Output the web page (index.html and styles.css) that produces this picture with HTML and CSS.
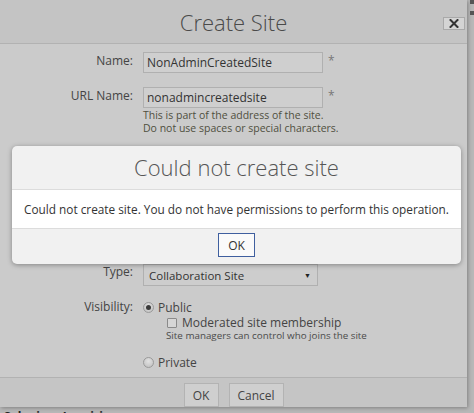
FILE: index.html
```html
<!DOCTYPE html>
<html>
<head>
<meta charset="utf-8">
<link rel="stylesheet" href="styles.css">
</head>
<body>
<div class="page">
  <div class="scroll-marks"><span></span><span></span></div>
  <div class="dialog">
    <div class="dlg-header">
      <div class="dlg-title">Create Site</div>
      <button class="close-btn" aria-label="Close">
        <svg width="10" height="9" viewBox="0 0 10 9"><path d="M1.5 1 L8.5 8 M8.5 1 L1.5 8" stroke="#333" stroke-width="2" stroke-linecap="square"/></svg>
      </button>
    </div>
    <div class="dlg-body">
      <div class="row row-name">
        <label class="lbl">Name:</label>
        <div class="field">
          <div class="input-wrap"><div class="input">NonAdminCreatedSite</div><span class="req">*</span></div>
        </div>
      </div>
      <div class="row row-url">
        <label class="lbl">URL Name:</label>
        <div class="field">
          <div class="input-wrap"><div class="input">nonadmincreatedsite</div><span class="req">*</span></div>
          <div class="help">This is part of the address of the site.<br>Do not use spaces or special characters.</div>
        </div>
      </div>
      <div class="row row-desc">
        <label class="lbl">Description:</label>
        <div class="field"><div class="textarea"></div></div>
      </div>
      <div class="row row-type">
        <label class="lbl">Type:</label>
        <div class="field">
          <div class="select"><span>Collaboration Site</span><span class="arrow">&#9660;</span></div>
        </div>
      </div>
      <div class="row row-vis">
        <label class="lbl">Visibility:</label>
        <div class="field">
          <div class="opt"><span class="radio checked"></span><span class="opt-text">Public</span></div>
          <div class="sub">
            <div class="chk-line"><span class="checkbox"></span><span class="chk-text">Moderated site membership</span></div>
            <div class="sub-help">Site managers can control who joins the site</div>
          </div>
          <div class="opt opt-private"><span class="radio"></span><span class="opt-text">Private</span></div>
        </div>
      </div>
    </div>
    <div class="dlg-footer">
      <button class="btn btn-ok">OK</button>
      <button class="btn btn-cancel">Cancel</button>
    </div>
  </div>
  <div class="bg-text">Selenium Inquiries</div>

  <div class="modal">
    <div class="modal-header">Could not create site</div>
    <div class="modal-body">Could not create site. You do not have permissions to perform this operation.</div>
    <div class="modal-footer"><button class="modal-ok">OK</button></div>
  </div>
</div>
</body>
</html>
```
FILE: styles.css
```css
* { box-sizing: border-box; }
html, body { margin: 0; padding: 0; }
body {
  background: #b8b8b8;
  font-family: "Open Sans", "Liberation Sans", sans-serif;
  color: #444;
}
.page {
  position: relative;
  width: 474px;
  height: 413px;
  overflow: hidden;
}
.scroll-marks {
  position: absolute;
  right: 0;
  top: 0;
  width: 4px;
}
.scroll-marks span {
  display: block;
  height: 4px;
  background: #555;
  margin-bottom: 7px;
}
.dialog {
  width: 467px;
  height: 407px;
  background: #cbcbcb;
  box-shadow: 1px 1px 4px rgba(0,0,0,0.3);
  display: flex;
  flex-direction: column;
}
.dlg-header {
  position: relative;
  height: 44px;
  background: #c4c4c4;
  border-bottom: 1px solid #b2b2b2;
  display: flex;
  align-items: center;
  justify-content: center;
}
.dlg-title {
  font-size: 22px;
  font-weight: 300;
  color: #4a4a4a;
  margin-top: 1px;
}
.close-btn {
  position: absolute;
  right: 2px;
  top: 17px;
  width: 22px;
  height: 13px;
  padding: 0;
  border: 1px solid #a9a9a9;
  background: #d4d4d4;
  display: flex;
  align-items: center;
  justify-content: center;
}
.dlg-body {
  flex: 1;
  padding-top: 8px;
}
.row {
  display: grid;
  grid-template-columns: 133px 1fr;
  column-gap: 10px;
}
.lbl {
  text-align: right;
  font-size: 12px;
  color: #444;
  line-height: 16px;
}
.row-name .lbl, .row-url .lbl { padding-top: 1px; }
.row-url { margin-top: 14px; }
.input-wrap {
  display: flex;
  align-items: flex-start;
}
.input {
  width: 180px;
  height: 21px;
  border: 1px solid #b0b0b0;
  background: #cfcfcf;
  font-size: 12px;
  line-height: 19px;
  padding-left: 3px;
  color: #333;
}
.req {
  margin-left: 5px;
  font-size: 12px;
  color: #777;
  line-height: 18px;
}
.help {
  font-size: 10.5px;
  line-height: 12.5px;
  color: #4f4f40;
  padding-top: 1px;
}
.row-desc { margin-top: 12px; visibility: hidden; }
.textarea { width: 180px; height: 104px; }
.row-type { margin-top: 14px; }
.row-type .lbl { padding-top: 0; }
.select {
  width: 175px;
  height: 22px;
  border: 1px solid #b0b0b0;
  background: #cdcdcd;
  display: flex;
  align-items: center;
  justify-content: space-between;
  padding: 0 6px 0 5px;
  font-size: 11.5px;
  color: #333;
}
.arrow { font-size: 7px; color: #222; }
.row-vis { margin-top: 13px; }
.row-vis .lbl { padding-top: 0; }
.opt {
  display: flex;
  align-items: center;
  height: 16px;
}
.radio {
  width: 11px;
  height: 11px;
  border-radius: 50%;
  border: 1px solid #9a9a9a;
  background: radial-gradient(circle at 50% 35%, #e2e2e2, #bdbdbd);
  margin-right: 4px;
  position: relative;
}
.radio.checked::after {
  content: "";
  position: absolute;
  left: 2px;
  top: 2px;
  width: 5px;
  height: 5px;
  border-radius: 50%;
  background: #3a3a3a;
}
.opt-text { font-size: 12px; color: #444; }
.sub { padding-left: 23px; }
.chk-line {
  display: flex;
  align-items: center;
  height: 15px;
  padding-left: 1px;
}
.checkbox {
  width: 10px;
  height: 10px;
  border: 1px solid #8a8a8a;
  background: #d6d6d6;
  margin-right: 5px;
  border-radius: 1px;
}
.chk-text { font-size: 12px; line-height: 14px; color: #444; }
.sub-help {
  font-size: 9.8px;
  line-height: 12px;
  color: #4a4a4a;
  margin-top: 0;
}
.opt-private { margin-top: 12px; }
.dlg-footer {
  height: 30px;
  border-top: 1px solid #b2b2b2;
  background: #c5c5c5;
  display: flex;
  justify-content: center;
  align-items: flex-start;
  gap: 10px;
  padding-top: 5px;
}
.btn {
  height: 24px;
  border: 1px solid #b3b3b3;
  background: #cfcfcf;
  font-family: "Open Sans", "Liberation Sans", sans-serif;
  font-size: 12px;
  color: #444;
  padding: 0;
}
.btn-ok { width: 35px; }
.btn-cancel { width: 55px; }
.bg-text {
  margin-top: 3px;
  padding-left: 4px;
  font-size: 12px;
  font-weight: 700;
  color: #222;
  line-height: 14px;
}
.modal {
  position: absolute;
  left: 12px;
  top: 146px;
  width: 449px;
  height: 118px;
  border-radius: 5px;
  background: #f1f1f1;
  box-shadow: 0 1px 5px rgba(0,0,0,0.35);
  display: flex;
  flex-direction: column;
  overflow: hidden;
}
.modal-header {
  height: 44px;
  display: flex;
  align-items: center;
  justify-content: center;
  font-size: 22px;
  font-weight: 300;
  color: #555;
  border-bottom: 1px solid #dcdcdc;
  padding-bottom: 2px;
}
.modal-body {
  height: 39px;
  background: #fff;
  border-bottom: 1px solid #dcdcdc;
  display: flex;
  align-items: center;
  justify-content: center;
  font-size: 11.8px;
  color: #333;
}
.modal-footer {
  flex: 1;
  display: flex;
  justify-content: center;
  padding-top: 4px;
}
.modal-ok {
  width: 37px;
  height: 24px;
  border: 1px solid #3f5f9f;
  background: #fafafa;
  font-family: "Open Sans", "Liberation Sans", sans-serif;
  font-size: 12px;
  color: #333;
  padding: 0;
}
```
